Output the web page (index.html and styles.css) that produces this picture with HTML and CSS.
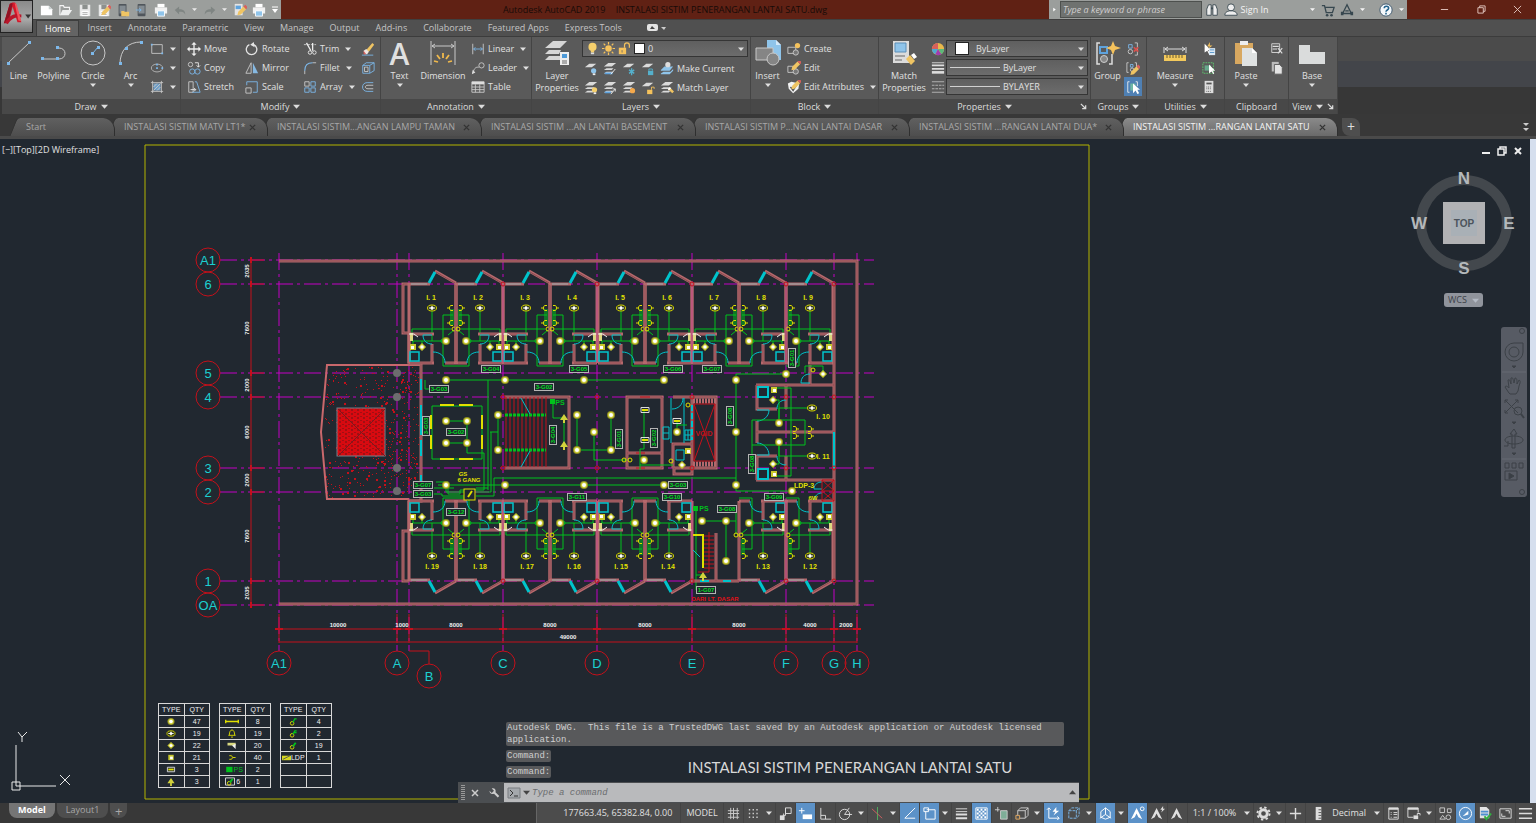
FILE: index.html
```html
<!DOCTYPE html>
<html lang="en">
<head>
    <meta charset="UTF-8">
    <meta name="viewport" content="width=device-width, initial-scale=1.0">
    <title>Autodesk AutoCAD 2019 - INSTALASI SISTIM PENERANGAN LANTAI SATU.dwg</title>
    <link rel="stylesheet" href="styles.css">
</head>
<body>
    <!-- Icon sprite -->
    <svg class="sprite" aria-hidden="true">
        <symbol id="caret" viewBox="0 0 8 8"><path d="M0 2h8L4 6.500z" fill="currentColor"/></symbol>
        <symbol id="launch" viewBox="0 0 8 8"><path d="M1 1l5 5M6.5 2.5v4h-4" fill="none" stroke="currentColor" stroke-width="1.4"/></symbol>
        <symbol id="new" viewBox="0 0 16 16"><path d="M1 3h9l4 4v7H1z" fill="#fff"/><path d="M10 3l4 4h-4z" fill="#c8d0d0"/></symbol>
        <symbol id="open" viewBox="0 0 16 16"><path d="M1 14V3h4l1 2h6v3" fill="none" stroke="#f4f4f4" stroke-width="1.3"/><path d="M4 8h11l-4 6H1z" fill="#eef0f0"/></symbol>
        <symbol id="save" viewBox="0 0 16 16"><path d="M2 2h12v13H2z" fill="#e8e8e8"/><path d="M5 2h6v5H5z" fill="#8c908e"/><path d="M4 9h8v6H4z" fill="#fff"/><path d="M5 11h6M5 13h6" stroke="#a5a5a5"/></symbol>
        <symbol id="pencil" viewBox="0 0 16 16"><path d="M5 14l1-4 6-6 3 3-6 6z" fill="#efc463"/><path d="M12 4l2-2 3 3-2 2z" fill="#d8605c"/></symbol>
        <symbol id="phone" viewBox="0 0 16 16"><rect x="3" y="1" width="9" height="14" rx="1" fill="#50565c"/><path d="M4 3h7v9H4z" fill="#848c92"/></symbol>
        <symbol id="print" viewBox="0 0 16 16"><path d="M4 1h8v4H4z" fill="#fff"/><path d="M1 5h14v7H1z" fill="#f1f1f1"/><path d="M4 9h8v6H4z" fill="#8fc4ea" stroke="#fff"/></symbol>
        <symbol id="undo" viewBox="0 0 16 16"><path d="M2 8l5-4v3c5 0 7 2 7 6-2-3-4-3-7-3v3z" fill="#7f8583"/></symbol>
        <symbol id="line" viewBox="0 0 26 26"><path d="M2 23L24 2" stroke="#c8c8c8"/><path d="M1 22h3v3H1zM22 1h3v3h-3z" fill="#7db8ea"/></symbol>
        <symbol id="polyline" viewBox="0 0 26 26"><path d="M2 19h16c8 0 8-11 0-11" fill="none" stroke="#c8c8c8"/><path d="M0 17h3v3H0zM15 17h3v3h-3zM15 6h3v3h-3z" fill="#7db8ea"/></symbol>
        <symbol id="circle" viewBox="0 0 26 26"><circle cx="13" cy="13" r="12" fill="none" stroke="#c8c8c8"/><path d="M13 13l5-6" stroke="#7db8ea"/><path d="M11 12h3v3h-3zM17 6h3v3h-3z" fill="#7db8ea"/></symbol>
        <symbol id="arc" viewBox="0 0 26 26"><path d="M2 24C2 10 10 2 23 2" fill="none" stroke="#c8c8c8"/><path d="M1 22h3v3H1zM22 1h3v3h-3zM7 7h3v3H7z" fill="#7db8ea"/></symbol>
        <symbol id="rect" viewBox="0 0 16 16"><path d="M2 3h12v10H2z" fill="none" stroke="#c8c8c8"/><path d="M1 2h2v2H1zM13 12h2v2h-2z" fill="#7db8ea"/></symbol>
        <symbol id="ellipse" viewBox="0 0 16 16"><ellipse cx="8" cy="8" rx="6.500" ry="4.500" fill="none" stroke="#b8b8b8"/><path d="M7 7h2v2H7zM13 7h2v2h-2zM7 3h2v2H7z" fill="#7db8ea"/></symbol>
        <symbol id="hatch" viewBox="0 0 16 16"><path d="M4 4h8v8H4z" fill="#6f9fc8"/><path d="M3 1v14M13 1v14M1 3h14M1 13h14M4 8l4-4M4 12l8-8M8 12l4-4" stroke="#c8c8c8"/></symbol>
        <symbol id="move" viewBox="0 0 16 16"><path d="M8 2v12M2 8h12" stroke="#eee" stroke-width="1.500"/><path d="M8 0l3 3H5zM8 16l3-3H5zM0 8l3-3v6zM16 8l-3-3v6z" fill="#eee"/></symbol>
        <symbol id="copy" viewBox="0 0 16 16"><circle cx="4" cy="4" r="2.500" fill="none" stroke="#ccc"/><path d="M9 2h4v5M11 5l2 2 2-2" fill="none" stroke="#eee"/><circle cx="6" cy="12" r="3" fill="none" stroke="#7db8ea"/><circle cx="12" cy="12" r="3" fill="none" stroke="#7db8ea"/></symbol>
        <symbol id="stretch" viewBox="0 0 16 16"><path d="M2 2h5v12H2z" fill="none" stroke="#ccc"/><path d="M9 2h2l4 12H6" fill="none" stroke="#7db8ea"/><path d="M4 11h6M8 9l2 2-2 2" fill="none" stroke="#eee"/></symbol>
        <symbol id="rotate" viewBox="0 0 16 16"><path d="M10 3a6 6 0 1 1-5 0" fill="none" stroke="#e4e4e4" stroke-width="1.500"/><path d="M10 0l-4 3 5 3z" fill="#e4e4e4"/></symbol>
        <symbol id="mirror" viewBox="0 0 16 16"><path d="M7 2v12H1z" fill="none" stroke="#ccc"/><path d="M9 2v12h6z" fill="#86b9e2"/></symbol>
        <symbol id="scale" viewBox="0 0 16 16"><path d="M2 6V2h12v12h-5" fill="none" stroke="#7db8ea"/><path d="M1 9h6v6H1z" fill="none" stroke="#ccc"/></symbol>
        <symbol id="trim" viewBox="0 0 16 16"><path d="M1 3h14" stroke="#ccc" stroke-dasharray="3 1"/><path d="M4 1l5 9M11 1v9" stroke="#eee" stroke-width="1.500"/><circle cx="8" cy="12" r="2" fill="none" stroke="#eee"/><circle cx="13" cy="12" r="2" fill="none" stroke="#eee"/></symbol>
        <symbol id="fillet" viewBox="0 0 16 16"><path d="M2 15v-4M11 2h4" stroke="#ccc"/><path d="M2 11c0-6 3-9 9-9" fill="none" stroke="#7db8ea" stroke-width="1.300"/></symbol>
        <symbol id="array" viewBox="0 0 16 16"><path d="M2 2h5v5H2z" fill="none" stroke="#ccc"/><path d="M9 2h5v5H9zM2 9h5v5H2zM9 9h5v5H9z" fill="none" stroke="#7db8ea"/></symbol>
        <symbol id="erase" viewBox="0 0 16 16"><path d="M6 9l7-8 2 2-6 8z" fill="#efc463"/><path d="M3 10l3-2 3 3-2 3H4z" fill="#f1e7e2"/><path d="M1 15h13" stroke="#7db8ea"/><path d="M3 10l3 4H3z" fill="#d8605c"/></symbol>
        <symbol id="explode" viewBox="0 0 16 16"><path d="M2 5h8v9H2zM2 5l4-3h9v9l-5 3M10 5l5-3" fill="none" stroke="#7db8ea"/><path d="M4 7h4v5H4z" fill="none" stroke="#ccc"/></symbol>
        <symbol id="offset" viewBox="0 0 16 16"><path d="M14 3H7C0 3 0 13 7 13h7" fill="none" stroke="#7db8ea"/><path d="M14 6H8C4 6 4 10 8 10h6" fill="none" stroke="#ccc"/></symbol>
        <symbol id="dimension" viewBox="0 0 26 26"><path d="M1 1v24M25 1v24M2 6h22M5 4L2 6l3 2M21 4l3 2-3 2" fill="none" stroke="#c8c8c8"/><path d="M13 13v5M7 15l3 4M19 15l-3 4M4 21l4 1M22 21l-4 1" stroke="#f0b94c" stroke-width="1.800"/></symbol>
        <symbol id="linear" viewBox="0 0 16 16"><path d="M2 2v12M14 2v12" stroke="#ccc"/><path d="M3 8h10M5 6L3 8l2 2M11 6l2 2-2 2" fill="none" stroke="#7db8ea"/></symbol>
        <symbol id="leader" viewBox="0 0 16 16"><path d="M2 14C4 7 6 7 9 7" fill="none" stroke="#ccc"/><circle cx="12" cy="5" r="3" fill="none" stroke="#ccc"/><path d="M1 15l1-5 3 3z" fill="#ddd"/></symbol>
        <symbol id="table" viewBox="0 0 16 16"><path d="M1 2h14v12H1zM1 8h14M1 11h14M5 5v9M10 5v9" fill="none" stroke="#ccc"/><path d="M1 2h14v3H1z" fill="#ddd"/></symbol>
        <symbol id="stack" viewBox="0 0 16 16"><path d="M1 5l5-4h9l-5 4zM1 9l3-2h8l-2 2zM1 13l3-2h8l-2 2z" fill="#dadada"/></symbol>
        <symbol id="sheet" viewBox="0 0 16 16"><path d="M1 6l5-4h8l-5 4z" fill="#dadada"/></symbol>
        <symbol id="layers" viewBox="0 0 26 26"><path d="M1 8l8-7h14l-7 7zM1 14l4-4h12l-2 4zM1 20l4-4h11v4z" fill="#d6d6d6"/><path d="M16 12h9v13h-9z" fill="#eee"/><path d="M18 14h5v4h-5z" fill="#4e9ad8"/><path d="M18 21h5M18 23h5" stroke="#666"/></symbol>
        <symbol id="bulb" viewBox="0 0 16 16"><circle cx="8" cy="6" r="5" fill="#f5cf6c"/><path d="M6 10h4v3H6z" fill="#f5cf6c"/><path d="M6 14h4" stroke="#ddd" stroke-width="2"/></symbol>
        <symbol id="sun" viewBox="0 0 16 16"><circle cx="8" cy="8" r="4" fill="#f5c25c"/><path d="M8 0v3M8 13v3M0 8h3M13 8h3M2 2l2 2M12 12l2 2M14 2l-2 2M4 12l-2 2" stroke="#f5c25c" stroke-width="1.500"/></symbol>
        <symbol id="lock" viewBox="0 0 16 16"><path d="M1 7h9v8H1z" fill="#f5c25c"/><path d="M8 7V4c0-4 6-4 6 0v3" fill="none" stroke="#f5c25c" stroke-width="1.500"/><path d="M5 10v3" stroke="#666"/></symbol>
        <symbol id="insert" viewBox="0 0 26 26"><path d="M12 0h9l5 5v15H12z" fill="#8fc4ea"/><path d="M21 0l5 5h-5z" fill="#d4e8f8"/><path d="M1 8h17v12H1z" fill="#858585" stroke="#c8c8c8"/><circle cx="18" cy="19" r="6" fill="#858585" stroke="#c8c8c8"/></symbol>
        <symbol id="block" viewBox="0 0 16 16"><path d="M1 6h9v7H1z" fill="none" stroke="#ccc"/><circle cx="10" cy="12" r="3" fill="#777" stroke="#ccc"/></symbol>
        <symbol id="tag" viewBox="0 0 16 16"><path d="M1 4l4-2 9 2-1 6-6 5-5-5z" fill="#f2f2f2"/><path d="M4 8l3 4 5-8" fill="none" stroke="#555" stroke-width="1.500"/></symbol>
        <symbol id="match" viewBox="0 0 26 26"><path d="M2 1h16v22H2z" fill="#dcdcdc"/><path d="M4 3h11v9H4z" fill="#8fc4ea" stroke="#5c8fb8"/><path d="M4 16h10M4 20h7" stroke="#666"/><path d="M15 19l4-4 5 6-4 4z" fill="#efc463"/><path d="M20 15l3-2 3 4-3 2z" fill="#fff"/></symbol>
        <symbol id="wheel" viewBox="0 0 16 16"><circle cx="8" cy="8" r="7" fill="#e8b84c"/><path d="M8 8V1a7 7 0 0 0-7 7z" fill="#d8605c"/><path d="M8 8H1a7 7 0 0 0 4 6z" fill="#4fa9d0"/><path d="M8 8l-3 6a7 7 0 0 0 7 0z" fill="#a03cb0"/><path d="M8 8l4 6a7 7 0 0 0 3-6z" fill="#5cb87c"/></symbol>
        <symbol id="weights" viewBox="0 0 16 16"><path d="M1 2h14" stroke="#ddd"/><path d="M1 5h14" stroke="#ddd" stroke-width="2"/><path d="M1 9h14" stroke="#ddd" stroke-width="2"/><path d="M1 13h14" stroke="#ddd" stroke-width="3"/></symbol>
        <symbol id="types" viewBox="0 0 16 16"><path d="M1 2h14M1 14h14" stroke="#bbb"/><path d="M1 6h14M1 10h14" stroke="#bbb" stroke-dasharray="3 1"/></symbol>
        <symbol id="group" viewBox="0 0 26 26"><path d="M5 3H2v21h3M14 24h3V14" fill="none" stroke="#ddd" stroke-width="1.500"/><path d="M5 7h7v6H5z" fill="none" stroke="#5ea3de" stroke-width="2"/><circle cx="9" cy="19" r="3.500" fill="#888" stroke="#ccc"/><path d="M18 1l2 5 6 2-6 2-2 5-2-5-5-2 5-2z" fill="#f5c25c"/></symbol>
        <symbol id="ungroup" viewBox="0 0 16 16"><path d="M3 3h4v4H3z" fill="none" stroke="#7db8ea"/><path d="M10 1h3v14h-3" fill="none" stroke="#ccc"/><circle cx="5" cy="11" r="2.500" fill="none" stroke="#ccc"/><path d="M9 6l5 5M14 6l-5 5" stroke="#d8504c" stroke-width="2"/></symbol>
        <symbol id="groupsel" viewBox="0 0 16 16"><path d="M4 2H2v12h2M11 2h2v5" fill="none" stroke="#eee"/><path d="M5 4h6v8H5z" fill="#6fb8a4"/><path d="M8 4v11l3-3 2 4 2-1-2-4h3z" fill="#fff"/></symbol>
        <symbol id="measure" viewBox="0 0 26 26"><path d="M2 7v6M24 7v6M3 9h20M6 7L3 9l3 2M20 7l3 2-3 2" fill="none" stroke="#ddd"/><path d="M2 15h22v6H2z" fill="#f3c95c"/><path d="M5 15v3M8 15v3M11 15v3M14 15v3M17 15v3M20 15v3" stroke="#6a5a30"/></symbol>
        <symbol id="quick" viewBox="0 0 16 16"><path d="M3 2v10l3-2 2 4 1-1-2-4h3z" fill="#fff"/><path d="M9 0L6 5h3L7 8l5-4H9z" fill="#f5c25c"/><path d="M8 7h7v8H8z" fill="#dbe9f4"/><path d="M9 9h5M9 12h5" stroke="#4e8fc8"/></symbol>
        <symbol id="select" viewBox="0 0 16 16"><path d="M1 2h12v12H1z" fill="none" stroke="#5ecb70" stroke-dasharray="2 1"/><path d="M3 5h7v6H3z" fill="#67a98c"/><path d="M8 4v10l3-2 2 3 1-1-2-3h3z" fill="#fff"/></symbol>
        <symbol id="calc" viewBox="0 0 16 16"><path d="M3 1h10v14H3z" fill="#ddd"/><path d="M5 3h6v2H5z" fill="#555"/><path d="M5 8h6M5 10h6M5 13h6" stroke="#555" stroke-dasharray="1 1"/></symbol>
        <symbol id="paste" viewBox="0 0 26 26"><path d="M2 3h18v21H2z" fill="#d8a860"/><path d="M7 1h8v4H7z" fill="#eee"/><path d="M9 8h10l5 5v13H9z" fill="#dfe2e2"/><path d="M19 8l5 5h-5z" fill="#fff"/></symbol>
        <symbol id="cut" viewBox="0 0 16 16"><path d="M2 2h9v10H2z" fill="none" stroke="#ddd"/><path d="M3 5h7M3 8h5M9 7l5 6M14 7l-5 6" stroke="#ddd" stroke-width="1.300"/></symbol>
        <symbol id="pages" viewBox="0 0 16 16"><path d="M2 1h8v11H2z" fill="#bbb"/><path d="M5 4h6l3 3v8H5z" fill="#e4e4e4" stroke="#555"/></symbol>
        <symbol id="base" viewBox="0 0 26 26"><path d="M0 5h11v7h15v12H0z" fill="#dadcdc"/></symbol>
        <symbol id="wrench" viewBox="0 0 16 16"><path d="M2 5l3 3 3-3-3-3c4-1 6 2 5 5l5 5-2 2-5-5c-4 1-6-1-6-4z" fill="#ccc"/></symbol>
        <symbol id="close" viewBox="0 0 8 8"><path d="M1 1l6 6M7 1L1 7" stroke="currentColor" stroke-width="1.500"/></symbol>
        <!-- status bar -->
        <symbol id="s-grid" viewBox="0 0 16 16"><path d="M5 2v12M8 2v12M12 2v12M2 5h12M2 8h12M2 12h12" stroke="#ccc"/></symbol>
        <symbol id="s-dots" viewBox="0 0 16 16"><path d="M3 4h10M3 8h10M3 12h10" stroke="#ccc" stroke-width="1.500" stroke-dasharray="1.500 2.500"/></symbol>
        <symbol id="s-infer" viewBox="0 0 16 16"><path d="M6 14V8M8 2h6v6H8z" fill="none" stroke="#ddd"/><path d="M8 2v8H5" fill="none" stroke="#ddd"/><path d="M2 10h5v5H2z" fill="#ddd"/></symbol>
        <symbol id="s-dyn" viewBox="0 0 16 16"><path d="M4 2v6M1 5h6" stroke="#fff"/><path d="M5 9h10v5H5z" fill="#fff"/></symbol>
        <symbol id="s-ortho" viewBox="0 0 16 16"><path d="M3 2v12h11M3 10h5v4" fill="none" stroke="#ddd"/></symbol>
        <symbol id="s-polar" viewBox="0 0 16 16"><circle cx="7" cy="9" r="5.500" fill="none" stroke="#ddd"/><path d="M7 9h8M7 9l5-7" stroke="#ddd"/></symbol>
        <symbol id="s-iso" viewBox="0 0 16 16"><path d="M8 1v14" stroke="#4fae5c"/><path d="M2 3l11 10" stroke="#d06060"/></symbol>
        <symbol id="s-track" viewBox="0 0 16 16"><path d="M14 2L3 13h11" fill="none" stroke="#fff"/></symbol>
        <symbol id="s-osnap" viewBox="0 0 16 16"><path d="M5 4h9v10H4V6" fill="none" stroke="#fff"/><path d="M2 2h5v4H2z" fill="none" stroke="#fff"/></symbol>
        <symbol id="s-lw" viewBox="0 0 16 16"><path d="M2 3h12M2 6h12" stroke="#ddd"/><path d="M2 9h12M2 13h12" stroke="#ddd" stroke-width="2"/></symbol>
        <symbol id="s-trans" viewBox="0 0 16 16"><path d="M2 2h12v12H2z" fill="none" stroke="#fff"/><path d="M3 4h10M3 8h10M3 12h10" stroke="#fff" stroke-width="2" stroke-dasharray="2 2"/><path d="M5 6h8M5 10h8" stroke="#fff" stroke-width="2" stroke-dasharray="2 2"/></symbol>
        <symbol id="s-cycle" viewBox="0 0 16 16"><path d="M1 4h5M4 1v5" stroke="#ccc"/><path d="M7 5h7v9H7z" fill="#7fae98" stroke="#ccc"/></symbol>
        <symbol id="s-cube" viewBox="0 0 16 16"><path d="M4 5h8v8H4zM4 5l3-3h8v8l-3 3M12 5l3-3" fill="none" stroke="#ccc"/><path d="M2 10h4v4H2z" fill="#555" stroke="#e0a860"/></symbol>
        <symbol id="s-ucs" viewBox="0 0 16 16"><path d="M3 2v11h11M1 4l2-2 2 2M12 11l2 2-2 2" fill="none" stroke="#fff"/><path d="M11 1L7 6h3l-2 4 6-5h-3z" fill="#fff"/></symbol>
        <symbol id="s-filter" viewBox="0 0 16 16"><path d="M3 5h8v8H3zM3 5l3-3h8v8l-3 3M11 5l3-3" fill="none" stroke="#7db8ea" stroke-dasharray="3 1"/></symbol>
        <symbol id="s-gizmo" viewBox="0 0 16 16"><path d="M8 2L3 6v6l5 2 5-2V6zM8 2v7M8 9l-6 4M8 9l6 4" fill="none" stroke="#fff"/></symbol>
        <symbol id="s-anno" viewBox="0 0 16 16"><path d="M7 2L1 14l4-2 2-4 2 4 4 2z" fill="currentColor"/></symbol>
        <symbol id="s-gear" viewBox="0 0 16 16"><circle cx="8" cy="8" r="4" fill="none" stroke="#ddd" stroke-width="3"/><circle cx="8" cy="8" r="6.500" fill="none" stroke="#ddd" stroke-width="2" stroke-dasharray="2.500 2.600"/></symbol>
        <symbol id="s-plus" viewBox="0 0 16 16"><path d="M8 2v12M2 8h12" stroke="#ddd" stroke-width="1.500"/></symbol>
        <symbol id="s-ruler" viewBox="0 0 16 16"><path d="M5 1h6v14H5z" fill="#ddd"/><path d="M8 4h3M8 7h3M8 10h3M8 13h3" stroke="#555"/></symbol>
        <symbol id="s-props" viewBox="0 0 16 16"><path d="M3 2h10v12H3z" fill="none" stroke="#ddd"/><path d="M3 3h10" stroke="#ddd" stroke-width="2"/><path d="M5 7h1M8 7h4M5 9h1M8 9h4M5 12h1M8 12h4" stroke="#ddd"/></symbol>
        <symbol id="s-uilock" viewBox="0 0 16 16"><path d="M8 12H2V2h11v5" fill="none" stroke="#ddd"/><path d="M2 3h11" stroke="#ddd" stroke-width="2"/><path d="M8 10h5v4H8z" fill="#ddd"/><path d="M12 10V8h3v2" fill="none" stroke="#ddd"/></symbol>
        <symbol id="s-isolate" viewBox="0 0 16 16"><path d="M2 2h5v5H2zM10 3h4v4h-4zM5 10l3 4H2z" fill="none" stroke="#ccc"/><circle cx="11" cy="12" r="2.500" fill="none" stroke="#ccc"/></symbol>
        <symbol id="s-perf" viewBox="0 0 16 16"><circle cx="8" cy="8" r="6.500" fill="none" stroke="#fff"/><path d="M5 11l6-6v4z" fill="#fff"/></symbol>
        <symbol id="s-doc" viewBox="0 0 16 16"><path d="M2 1h7l3 3v9H2z" fill="#e4e4e4"/><path d="M3 6h8M3 9h8" stroke="#4e8fd0" stroke-width="2"/><path d="M7 11l2 3 5-6" fill="none" stroke="#30b040" stroke-width="2"/></symbol>
        <symbol id="s-full" viewBox="0 0 16 16"><path d="M2 3h12v10H2z" fill="none" stroke="#ddd"/><path d="M8 5h4v3M4 8v3h4" fill="none" stroke="#ddd"/></symbol>
        <symbol id="s-menu" viewBox="0 0 16 16"><path d="M1 3h14M1 8h14M1 13h14" stroke="#ddd" stroke-width="1.500"/></symbol>
    </svg>

    <!-- Title bar -->
    <header class="titlebar">
        <button class="app-menu" aria-label="Application menu">
            <svg viewBox="0 0 32 32"><path d="M3 23L9 3c1-1 4-2 6-1l6 20h-4L12 6 8 22z" fill="#d3182b"/><path d="M9 3c2-1 3-1 3 0L7 23H3z" fill="#8f1223"/><path d="M4 22c4-7 10-10 17-8v3c-6-1-10 1-14 7z" fill="#b8162a"/><path d="M14 2l2 1 5 18-3-1z" fill="#f0545c"/><path d="M25 14h6l-3 4z" fill="#333"/></svg>
        </button>
        <div class="quick">
            <button aria-label="New"><svg><use href="#new"/></svg></button>
            <button aria-label="Open"><svg><use href="#open"/></svg></button>
            <button aria-label="Save"><svg><use href="#save"/></svg></button>
            <button aria-label="Save as"><svg><use href="#save"/><use href="#pencil"/></svg></button>
            <button aria-label="Open from mobile"><svg viewBox="0 0 16 16"><use href="#phone"/><path d="M6 9h3l1 1h5v5H6z" fill="#efc463"/></svg></button>
            <button aria-label="Save to mobile"><svg viewBox="0 0 16 16"><use href="#phone"/><path d="M1 8h6M5 6l2 2-2 2" stroke="#7db8ea" fill="none"/></svg></button>
            <button aria-label="Plot"><svg><use href="#print"/></svg></button>
            <button aria-label="Undo"><svg><use href="#undo"/></svg></button>
            <button class="mini" aria-label="Undo list"><svg><use href="#caret"/></svg></button>
            <button aria-label="Redo"><svg class="flip"><use href="#undo"/></svg></button>
            <button class="mini" aria-label="Redo list"><svg><use href="#caret"/></svg></button>
            <button aria-label="Batch plot"><svg viewBox="0 0 16 16"><path d="M2 1h9v13H2z" fill="#e4e4e4"/><path d="M3 3h6v4H3z" fill="#5ea3de"/><use href="#pencil"/></svg></button>
            <button aria-label="Plot preview"><svg><use href="#print"/></svg></button>
            <button class="mini" aria-label="Customize"><svg viewBox="0 0 8 8"><path d="M1 1h6" stroke="#fff"/><path d="M1 3h6L4 7z" fill="#fff"/></svg></button>
        </div>
        <h1>Autodesk AutoCAD 2019 <span>INSTALASI SISTIM PENERANGAN LANTAI SATU.dwg</span></h1>
        <div class="info">
            <button class="mini" aria-label="Collapse search"><svg viewBox="0 0 8 8"><path d="M2 1l4 3-4 3z" fill="#fff"/></svg></button>
            <input type="text" aria-label="Search" placeholder="Type a keyword or phrase">
            <button aria-label="Find"><svg viewBox="0 0 16 16"><path d="M2 14V7l2-5h3v12zM9 14V2h3l2 5v7z" fill="#eee" stroke="#37474f"/><path d="M7 6h2" stroke="#37474f" stroke-width="2"/></svg></button>
            <button class="sign"><svg viewBox="0 0 16 16"><circle cx="8" cy="5" r="4" fill="#eee" stroke="#37474f"/><path d="M1 14c0-4 3-4 5-5h4c2 1 5 1 5 5z" fill="#eee" stroke="#37474f"/></svg>Sign In<svg class="c"><use href="#caret"/></svg></button>
            <button class="cart" aria-label="App store"><svg viewBox="0 0 16 16"><path d="M1 3h3l2 8h7l2-6H5" fill="none" stroke="#37474f" stroke-width="1.500"/><circle cx="7" cy="14" r="1.500" fill="#37474f"/><circle cx="12" cy="14" r="1.500" fill="#37474f"/></svg></button>
            <button aria-label="Stay connected"><svg viewBox="0 0 16 16"><path d="M8 2L3 12h10zM6 9h4" fill="none" stroke="#37474f" stroke-width="1.500"/><path d="M1 10h3v4H1zM12 10h3v4h-3z" fill="#37474f"/></svg></button>
            <button class="mini" aria-label="Connect menu"><svg><use href="#caret"/></svg></button>
            <button class="help" aria-label="Help"><svg viewBox="0 0 16 16"><circle cx="8" cy="8" r="7" fill="#f4f8fb" stroke="#37536a"/><path d="M6 6c0-3 5-3 5 0 0 2-3 2-3 4M8 11v2" fill="none" stroke="#23638c" stroke-width="1.800"/></svg></button>
            <button class="mini" aria-label="Help menu"><svg><use href="#caret"/></svg></button>
        </div>
        <div class="window">
            <button aria-label="Minimize"><svg viewBox="0 0 10 10"><path d="M1 5h8" stroke="currentColor"/></svg></button>
            <button aria-label="Restore"><svg viewBox="0 0 10 10"><path d="M1 3h6v6H1zM3 3V1h6v6H7" fill="none" stroke="currentColor"/></svg></button>
            <button aria-label="Close"><svg viewBox="0 0 10 10"><path d="M1 1l8 8M9 1L1 9" stroke="currentColor"/></svg></button>
        </div>
    </header>

    <nav class="menu">
        <a class="on" href="#">Home</a><a href="#">Insert</a><a href="#">Annotate</a><a href="#">Parametric</a><a href="#">View</a><a href="#">Manage</a><a href="#">Output</a><a href="#">Add-ins</a><a href="#">Collaborate</a><a href="#">Featured Apps</a><a href="#">Express Tools</a>
        <button aria-label="Minimize ribbon"><svg viewBox="0 0 20 8"><rect x="1" width="11" height="7" rx="2" fill="#e4e4e4"/><path d="M4 5h5L6 2z" fill="#444"/><path d="M15 3h5l-2 3z" fill="#ccc"/></svg></button>
    </nav>

    <!-- Ribbon -->
    <div class="ribbon">
        <section class="panel">
            <div class="tools">
                <button class="big w33"><svg><use href="#line"/></svg>Line</button>
                <button class="big w36"><svg><use href="#polyline"/></svg>Polyline</button>
                <button class="big w42"><svg><use href="#circle"/></svg>Circle<svg class="c"><use href="#caret"/></svg></button>
                <button class="big w33"><svg><use href="#arc"/></svg>Arc<svg class="c"><use href="#caret"/></svg></button>
                <div class="col">
                    <button aria-label="Rectangle"><svg><use href="#rect"/></svg><svg class="c"><use href="#caret"/></svg></button>
                    <button aria-label="Ellipse"><svg><use href="#ellipse"/></svg><svg class="c"><use href="#caret"/></svg></button>
                    <button aria-label="Hatch"><svg><use href="#hatch"/></svg><svg class="c"><use href="#caret"/></svg></button>
                </div>
            </div>
            <h2>Draw <svg class="c"><use href="#caret"/></svg></h2>
        </section>
        <section class="panel">
            <div class="tools pad">
                <div class="col w58">
                    <button><svg><use href="#move"/></svg>Move</button>
                    <button><svg><use href="#copy"/></svg>Copy</button>
                    <button><svg><use href="#stretch"/></svg>Stretch</button>
                </div>
                <div class="col w58">
                    <button><svg><use href="#rotate"/></svg>Rotate</button>
                    <button><svg><use href="#mirror"/></svg>Mirror</button>
                    <button><svg><use href="#scale"/></svg>Scale</button>
                </div>
                <div class="col w58">
                    <button><svg><use href="#trim"/></svg>Trim<svg class="c"><use href="#caret"/></svg></button>
                    <button><svg><use href="#fillet"/></svg>Fillet<svg class="c"><use href="#caret"/></svg></button>
                    <button><svg><use href="#array"/></svg>Array<svg class="c"><use href="#caret"/></svg></button>
                </div>
                <div class="col">
                    <button aria-label="Erase"><svg><use href="#erase"/></svg></button>
                    <button aria-label="Explode"><svg><use href="#explode"/></svg></button>
                    <button aria-label="Offset"><svg><use href="#offset"/></svg></button>
                </div>
            </div>
            <h2>Modify <svg class="c"><use href="#caret"/></svg></h2>
        </section>
        <section class="panel">
            <div class="tools">
                <button class="big w36"><span class="glyph" aria-hidden="true">A</span>Text<svg class="c"><use href="#caret"/></svg></button>
                <button class="big w50"><svg><use href="#dimension"/></svg>Dimension</button>
                <div class="col w58">
                    <button><svg><use href="#linear"/></svg>Linear<svg class="c"><use href="#caret"/></svg></button>
                    <button><svg><use href="#leader"/></svg>Leader<svg class="c"><use href="#caret"/></svg></button>
                    <button><svg><use href="#table"/></svg>Table</button>
                </div>
            </div>
            <h2>Annotation <svg class="c"><use href="#caret"/></svg></h2>
        </section>
        <section class="panel">
            <div class="tools">
                <button class="big w50"><svg><use href="#layers"/></svg>Layer<br>Properties</button>
                <div class="col grow">
                    <div class="combo">
                        <svg><use href="#bulb"/></svg><svg><use href="#sun"/></svg><svg><use href="#lock"/></svg><i class="swatch"></i>
                        <select aria-label="Layer"><option>0</option></select><svg class="c"><use href="#caret"/></svg>
                    </div>
                    <div class="row">
                        <button aria-label="Off"><svg viewBox="0 0 16 16"><use href="#sheet"/><circle cx="11" cy="10" r="3" fill="#8fc4ea"/><path d="M10 13h3v2h-3z" fill="#eee"/></svg></button>
                        <button aria-label="Isolate"><svg viewBox="0 0 16 16"><use href="#stack"/><path d="M2 13h9" stroke="#5ea3de" stroke-width="2"/><path d="M9 14l5-6" stroke="#eee"/></svg></button>
                        <button aria-label="Freeze"><svg viewBox="0 0 16 16"><use href="#sheet"/><path d="M11 7v8M8 9l6 4M14 9l-6 4" stroke="#55b0cc" stroke-width="1.500"/></svg></button>
                        <button aria-label="Lock layer"><svg viewBox="0 0 16 16"><use href="#sheet"/><path d="M8 10h6v5H8z" fill="#55b0cc"/><path d="M9 10V8h4v2" fill="none" stroke="#55b0cc"/></svg></button>
                        <button><svg viewBox="0 0 16 16"><path d="M1 9l4-4h10l-4 5H1zM1 13l3-2h8l3-3v2l-4 4H1z" fill="#8fc4ea"/><circle cx="9" cy="3" r="3" fill="#ddd"/></svg>Make Current</button>
                    </div>
                    <div class="row">
                        <button aria-label="Turn on"><svg viewBox="0 0 16 16"><use href="#stack"/><circle cx="12" cy="10" r="3" fill="#f5cf6c"/><path d="M11 13h3v2h-3z" fill="#eee"/></svg></button>
                        <button aria-label="Unisolate"><svg viewBox="0 0 16 16"><use href="#stack"/><path d="M2 13h7" stroke="#5ea3de" stroke-width="2"/><path d="M9 15l5-6M11 9h3v3" stroke="#eee" fill="none"/></svg></button>
                        <button aria-label="Thaw"><svg viewBox="0 0 16 16"><use href="#stack"/><circle cx="12" cy="11" r="3" fill="#f5a94c"/></svg></button>
                        <button aria-label="Unlock layer"><svg viewBox="0 0 16 16"><use href="#sheet"/><path d="M7 10h6v5H7z" fill="#f5c25c"/><path d="M12 10V7h3v2" fill="none" stroke="#f5c25c"/></svg></button>
                        <button><svg viewBox="0 0 16 16"><use href="#stack"/><path d="M9 9l5 5 2-2-4-4z" fill="#efc463"/><path d="M9 9l2-2 2 1-3 3z" fill="#fff"/></svg>Match Layer</button>
                    </div>
                </div>
            </div>
            <h2>Layers <svg class="c"><use href="#caret"/></svg></h2>
        </section>
        <section class="panel">
            <div class="tools">
                <button class="big w33"><svg><use href="#insert"/></svg>Insert<svg class="c"><use href="#caret"/></svg></button>
                <div class="col grow">
                    <button><svg viewBox="0 0 16 16"><use href="#block"/><circle cx="12" cy="4" r="3" fill="#f5c25c"/></svg>Create</button>
                    <button><svg><use href="#block"/><use href="#pencil" y="-3"/></svg>Edit</button>
                    <button><svg><use href="#tag"/><use href="#pencil" y="-3"/></svg>Edit Attributes<svg class="c"><use href="#caret"/></svg></button>
                </div>
            </div>
            <h2>Block <svg class="c"><use href="#caret"/></svg></h2>
        </section>
        <section class="panel">
            <div class="tools">
                <button class="big w50"><svg><use href="#match"/></svg>Match<br>Properties</button>
                <div class="col icons">
                    <button aria-label="Color"><svg><use href="#wheel"/></svg></button>
                    <button aria-label="Lineweight"><svg><use href="#weights"/></svg></button>
                    <button aria-label="Linetype"><svg><use href="#types"/></svg></button>
                </div>
                <div class="col grow">
                    <div class="combo"><i class="swatch big-swatch"></i><select aria-label="Object color"><option>ByLayer</option></select><svg class="c"><use href="#caret"/></svg></div>
                    <div class="combo"><i class="rule"></i><select aria-label="Lineweight"><option>ByLayer</option></select><svg class="c"><use href="#caret"/></svg></div>
                    <div class="combo"><i class="rule"></i><select aria-label="Linetype"><option>BYLAYER</option></select><svg class="c"><use href="#caret"/></svg></div>
                </div>
            </div>
            <h2>Properties <svg class="c"><use href="#caret"/></svg><svg class="launch"><use href="#launch"/></svg></h2>
        </section>
        <section class="panel">
            <div class="tools">
                <button class="big w33"><svg><use href="#group"/></svg>Group</button>
                <div class="col icons">
                    <button aria-label="Ungroup"><svg><use href="#ungroup"/></svg></button>
                    <button aria-label="Group edit"><svg viewBox="0 0 16 16"><path d="M3 2H1v11h2M10 2h2v5" fill="none" stroke="#ccc"/><path d="M5 4h3v3H5z" fill="none" stroke="#7db8ea"/><circle cx="7" cy="10" r="2" fill="none" stroke="#ccc"/><use href="#pencil" y="2"/></svg></button>
                    <button class="on" aria-label="Group selection"><svg><use href="#groupsel"/></svg></button>
                </div>
            </div>
            <h2>Groups <svg class="c"><use href="#caret"/></svg></h2>
        </section>
        <section class="panel">
            <div class="tools pad">
                <button class="big w50"><svg><use href="#measure"/></svg>Measure<svg class="c"><use href="#caret"/></svg></button>
                <div class="col icons">
                    <button aria-label="Quick select"><svg><use href="#quick"/></svg></button>
                    <button aria-label="Select all"><svg><use href="#select"/></svg></button>
                    <button aria-label="Calculator"><svg><use href="#calc"/></svg></button>
                </div>
            </div>
            <h2>Utilities <svg class="c"><use href="#caret"/></svg></h2>
        </section>
        <section class="panel">
            <div class="tools">
                <button class="big w42"><svg><use href="#paste"/></svg>Paste<svg class="c"><use href="#caret"/></svg></button>
                <div class="col">
                    <button aria-label="Cut"><svg><use href="#cut"/></svg></button>
                    <button aria-label="Copy clip"><svg><use href="#pages"/></svg></button>
                </div>
            </div>
            <h2>Clipboard</h2>
        </section>
        <section class="panel">
            <div class="tools">
                <button class="big grow"><svg><use href="#base"/></svg>Base<svg class="c"><use href="#caret"/></svg></button>
            </div>
            <h2>View <svg class="c"><use href="#caret"/></svg> <svg class="c"><use href="#launch"/></svg></h2>
        </section>
    </div>

    <!-- File tabs -->
    <nav class="files">
        <a class="t1" href="#">Start</a>
        <a class="t2" href="#">INSTALASI SISTIM MATV LT1*<svg><use href="#close"/></svg></a>
        <a class="t3" href="#">INSTALASI SISTIM...ANGAN LAMPU TAMAN<svg><use href="#close"/></svg></a>
        <a class="t3" href="#">INSTALASI SISTIM ...AN LANTAI BASEMENT<svg><use href="#close"/></svg></a>
        <a class="t3" href="#">INSTALASI SISTIM P...NGAN LANTAI DASAR<svg><use href="#close"/></svg></a>
        <a class="t3" href="#">INSTALASI SISTIM ...RANGAN LANTAI DUA*<svg><use href="#close"/></svg></a>
        <a class="t3 on" href="#">INSTALASI SISTIM ...RANGAN LANTAI SATU<svg><use href="#close"/></svg></a>
        <button class="add" aria-label="New drawing">+</button>
        <button class="more" aria-label="More files"><svg viewBox="0 0 8 10"><path d="M1 1h6L4 4zM1 6h6L4 9z" fill="#ccc"/></svg></button>
    </nav>

    <!-- Model space -->
    <main class="canvas">
        <svg class="drawing" viewBox="0 0 1100 664">
            <defs>
                <g id="lamp"><circle r="4" fill="#8c8c20"/><circle r="3" fill="#d2d23c"/><circle r="2" fill="#fff"/></g>
                <g id="oval"><ellipse rx="4.500" ry="3" fill="#333a20" stroke="#d2d200"/><path d="M-3 0h6M0-2v4" stroke="#fff"/><circle r="1.500" fill="#fff"/></g>
                <g id="diamond"><path d="M0-4l4 4-4 4-4-4z" fill="#c8c82c"/><circle r="1.800" fill="#fff"/></g>
                <g id="square"><path d="M-3-3h6v6h-6z" fill="#c8c82c"/><path d="M-1-1h3v3h-3z" fill="#fff"/></g>
                <g id="bar"><path d="M-4-2.500h8v5h-8z" fill="none" stroke="#ddd"/><path d="M-3 0h6" stroke="#e0e000" stroke-width="2"/></g>
                <g id="tri"><path d="M0-4l4 6h-8zM-1 2h2v3h-2z" fill="#d2d23c"/></g>
                <g id="sock"><path d="M2-2.500H0c-2 0-2 5 0 5h2M-1 0h-3" transform="scale(-1 1)" fill="none" stroke="#e0e000"/></g>
                <!-- half of a pair of rooms, measured from the shared wall -->
                <g id="unit" fill="none">
                    <g stroke="#00c21c">
                        <path d="M3 309v16M5 309v16M3 315h10v51H0M5 329h39v12M9 341h35M24 309v32M34 341v5M43 341v5M2 330l6 5"/>
                        <circle cx="13" cy="341" r="2"/>
                    </g>
                    <g stroke="#b5686c" stroke-width="3">
                        <path d="M0 283v80M22 334h25M24 344v19M0 363h11M22 363h25M47 283v80"/>
                    </g>
                    <g stroke="#8a4c52" stroke-width="1">
                        <path d="M0 285v76M24 334h22M24 345v17M2 363h9M24 363h22"/>
                    </g>
                    <g stroke="#00c4cc">
                        <path d="M11 363c0-7 5-11 12-11M33 335c0 6-4 9-9 9M24 335h9"/>
                        <path d="M37 352h9v9h-9z" stroke-width="1.500"/>
                    </g>
                    <path d="M43 333h3v8h-3z" fill="#ddd880"/><path d="M38 337l4-3h5" stroke="#eee"/>
                    <use href="#sock" x="5" y="308"/><use href="#sock" x="5" y="323"/>
                    <circle cx="2" cy="329" r="2" stroke="#e0e000"/>
                    <use href="#oval" x="24" y="308"/><use href="#lamp" x="10" y="341"/><use href="#diamond" x="34" y="347"/><use href="#square" x="43" y="347"/>
                </g>
                <g id="bay" fill="none">
                    <path d="M0 284h21M26 271l21 12" stroke="#b5686c" stroke-width="3"/>
                    <path d="M2 284h16" stroke="#8fb0b0"/>
                    <path d="M27 272l19 11" stroke="#8a4c52"/>
                    <path d="M20 283l6-11" stroke="#00c4cc" stroke-width="3"/>
                </g>
                <pattern id="brick" width="6" height="4" patternUnits="userSpaceOnUse"><path d="M0 0h6v4H0z" fill="#d80a10"/><path d="M0 0h2M3 2h2" stroke="#6a1418"/></pattern>
            </defs>
            <g id="plan" transform="translate(0 -139)">
                <path d="M145 145h944v654H145z" fill="none" stroke="#b4b400"/>
                <g stroke="#e8e8e8" fill="none"><path d="M16 745v41h40M12 782h8v8h-8zM18 732l4 5 5-5M22 737v5M60 775l10 10M70 775l-10 10"/></g>
            </g>
            <text class="caption" x="850" y="634" text-anchor="middle">INSTALASI SISTIM PENERANGAN LANTAI SATU</text>
        </svg>

        <div class="legend">
            <table>
                <tr><th>TYPE</th><th>QTY</th></tr>
                <tr><td><svg viewBox="-6 -5 12 10"><use href="#lamp"/></svg></td><td>47</td></tr>
                <tr><td><svg viewBox="-6 -5 12 10"><use href="#oval"/></svg></td><td>19</td></tr>
                <tr><td><svg viewBox="-6 -5 12 10"><use href="#diamond"/></svg></td><td>22</td></tr>
                <tr><td><svg viewBox="-6 -5 12 10"><use href="#square"/></svg></td><td>21</td></tr>
                <tr><td><svg viewBox="-6 -5 12 10"><use href="#bar"/></svg></td><td>3</td></tr>
                <tr><td><svg viewBox="-6 -5 12 10"><use href="#tri"/></svg></td><td>3</td></tr>
            </table>
            <table>
                <tr><th>TYPE</th><th>QTY</th></tr>
                <tr><td><svg class="wide" viewBox="-9 -5 18 10"><path d="M-7-2v4M7-2v4M-7 0H7" stroke="#e0e000" stroke-width="1.500"/></svg></td><td>8</td></tr>
                <tr><td><svg viewBox="-6 -5 12 10"><path d="M-4 2h8M-3 2c0-8 6-8 6 0M-1 4h2" fill="none" stroke="#e0e000"/></svg></td><td>19</td></tr>
                <tr><td><svg viewBox="-6 -5 12 10"><path d="M-5-3h9v3h-9z" fill="#d8d880"/><path d="M0 0l4 4V-2z" fill="#eee"/></svg></td><td>20</td></tr>
                <tr><td><svg viewBox="-6 -5 12 10"><path d="M-3-2h2c2 0 2 4 0 4h-2M1 0h3" fill="none" stroke="#e0e000"/></svg></td><td>40</td></tr>
                <tr><td class="ps"><svg viewBox="-6 -5 12 10"><path d="M-2-3h7v6h-7z" fill="#00c21c"/></svg>PS</td><td>2</td></tr>
                <tr><td><svg viewBox="-6 -5 12 10"><path d="M-5-4H5V4H-5z" fill="none" stroke="#ddd"/><circle cx="-1" cy="2" r="2" fill="none" stroke="#e0e000"/><path d="M0 1l3-4" stroke="#00c21c" stroke-width="2"/></svg>6</td><td>1</td></tr>
            </table>
            <table>
                <tr><th>TYPE</th><th>QTY</th></tr>
                <tr><td><svg viewBox="-6 -5 12 10"><circle cx="-1" cy="2" r="2" fill="none" stroke="#e0e000"/><path d="M0 1l2-4h2" stroke="#00c21c" fill="none" stroke-width="1.500"/></svg></td><td>4</td></tr>
                <tr><td><svg viewBox="-6 -5 12 10"><circle cx="-1" cy="2" r="2" fill="none" stroke="#e0e000"/><path d="M0 1l2-4h2M1-1h3" stroke="#00c21c" fill="none" stroke-width="1.500"/></svg></td><td>2</td></tr>
                <tr><td><svg viewBox="-6 -5 12 10"><circle cx="-1" cy="2" r="2" fill="none" stroke="#e0e000"/><path d="M0 1l3-4" stroke="#00c21c" stroke-width="2"/></svg></td><td>19</td></tr>
                <tr><td><svg class="slim" viewBox="-5 -5 10 10"><path d="M-5-2H5v5H-5z" fill="#d8d820"/><path d="M-4 2l8-4" stroke="#555"/></svg>LDP</td><td>1</td></tr>
                <tr><td></td><td></td></tr>
                <tr><td></td><td></td></tr>
            </table>
        </div>

        <div class="view-label">[&minus;][Top][2D Wireframe]</div>
        <div class="view-controls">
            <button aria-label="Minimize view"><svg viewBox="0 0 10 10"><path d="M1 7h8" stroke="#eee" stroke-width="2"/></svg></button>
            <button aria-label="Restore view"><svg viewBox="0 0 10 10"><path d="M1 3h6v6H1zM3 3V1h6v6H7" fill="none" stroke="#eee" stroke-width="1.500"/></svg></button>
            <button aria-label="Close view"><svg viewBox="0 0 10 10"><path d="M2 2l6 6M8 2L2 8" stroke="#eee" stroke-width="2"/></svg></button>
        </div>
        <svg class="cube" viewBox="0 0 112 112">
            <circle cx="56" cy="56" r="43" fill="none" stroke="#43484d" stroke-width="10"/>
            <path d="M35 35h42v42H35z" fill="#b2b2b4"/><path d="M43 43h26v26H43z" fill="#a9b0b6"/>
            <text class="face" x="56" y="60">TOP</text>
            <text x="56" y="17">N</text><text x="56" y="107">S</text><text x="11" y="62">W</text><text x="101" y="62">E</text>
        </svg>
        <button class="wcs">WCS <svg class="c"><use href="#caret"/></svg></button>
        <div class="navbar">
            <svg viewBox="0 0 26 170" fill="none" stroke="#3c4147">
                <circle cx="21" cy="4" r="2.500"/><circle cx="21" cy="165" r="2.500"/>
                <path d="M13 16h9v9a9 9 0 1 1-9-9z"/><circle cx="13" cy="25" r="5"/>
                <path d="M11 39h4l-2 2zM11 95h4l-2 2zM11 126h4l-2 2z" fill="#3a3f45"/>
                <path d="M8 66l-4-6c1-2 3 0 4 1l-1-8c2-1 2 1 3 4v-6c2-1 2 1 3 5l1-5c2 0 2 2 2 6l2-4c2 1 1 3 0 6l-1 5-2 3H9z"/>
                <path d="M4 73l13 13M17 73L4 86M4 76v-3h3M14 73h3v3M4 83v3h3"/><circle cx="17" cy="84" r="4"/><path d="M20 87l3 4" stroke-width="2"/>
                <path d="M11 121v-14H9l4-5 3 5h-2v14zM13 109c-12 0-12 8 0 8M13 109c12 0 12 8 0 8M7 114v5h-4"/>
                <path d="M1 45h24M1 132h24" stroke="#666b73"/>
                <path d="M4 136h4v5H4zM11 136h4v5h-4zM18 136h4v5h-4zM4 144h12v9H4z"/><path d="M8 146l5 3-5 3z" fill="#3a3f45"/>
            </svg>
        </div>

        <div class="command">
            <p class="long">Autodesk DWG.&nbsp; This file is a TrustedDWG last saved by an Autodesk application or Autodesk licensed application.</p>
            <p>Command:</p>
            <p>Command:</p>
            <div class="prompt">
                <span class="grip"></span>
                <button aria-label="Close command line"><svg class="x"><use href="#close"/></svg></button>
                <button aria-label="Customize"><svg><use href="#wrench"/></svg></button>
                <label class="entry">
                    <svg viewBox="0 0 14 12"><path d="M1 1h12v10H1z" fill="#a4a8ac" stroke="#787c80"/><path d="M3 3l3 3-3 3M7 9h4" fill="none" stroke="#333"/></svg>
                    <svg class="c"><use href="#caret"/></svg>
                    <input type="text" aria-label="Command" placeholder="Type a command">
                    <svg class="c flip-y"><use href="#caret"/></svg>
                </label>
            </div>
        </div>
    </main>

    <footer class="status">
        <nav class="layouts">
            <a class="on" href="#">Model</a><a href="#">Layout1</a><button aria-label="New layout">+</button>
        </nav>
        <div class="bar">
            <span class="coords">177663.45, 65382.84, 0.00</span>
            <button class="word">MODEL</button>
            <button aria-label="Grid"><svg><use href="#s-grid"/></svg></button>
            <button aria-label="Snap"><svg><use href="#s-dots"/></svg></button>
            <button class="arrow" aria-label="Snap menu"><svg><use href="#caret"/></svg></button>
            <button aria-label="Infer constraints"><svg><use href="#s-infer"/></svg></button>
            <button class="on" aria-label="Dynamic input"><svg><use href="#s-dyn"/></svg></button>
            <button aria-label="Ortho"><svg><use href="#s-ortho"/></svg></button>
            <button aria-label="Polar"><svg><use href="#s-polar"/></svg></button>
            <button class="arrow" aria-label="Polar menu"><svg><use href="#caret"/></svg></button>
            <button aria-label="Isodraft"><svg><use href="#s-iso"/></svg></button>
            <button class="arrow" aria-label="Isodraft menu"><svg><use href="#caret"/></svg></button>
            <button class="on" aria-label="Object snap tracking"><svg><use href="#s-track"/></svg></button>
            <button class="on" aria-label="Object snap"><svg><use href="#s-osnap"/></svg></button>
            <button class="arrow" aria-label="Object snap menu"><svg><use href="#caret"/></svg></button>
            <button aria-label="Lineweight"><svg><use href="#s-lw"/></svg></button>
            <button class="on" aria-label="Transparency"><svg><use href="#s-trans"/></svg></button>
            <button aria-label="Selection cycling"><svg><use href="#s-cycle"/></svg></button>
            <button aria-label="3D object snap"><svg><use href="#s-cube"/></svg></button>
            <button class="arrow" aria-label="3D snap menu"><svg><use href="#caret"/></svg></button>
            <button class="on" aria-label="Dynamic UCS"><svg><use href="#s-ucs"/></svg></button>
            <button aria-label="Selection filter"><svg><use href="#s-filter"/></svg></button>
            <button class="arrow" aria-label="Filter menu"><svg><use href="#caret"/></svg></button>
            <button class="on" aria-label="Gizmo"><svg><use href="#s-gizmo"/></svg></button>
            <button class="arrow" aria-label="Gizmo menu"><svg><use href="#caret"/></svg></button>
            <button class="on" aria-label="Annotation visibility"><svg viewBox="0 0 16 16"><use href="#s-anno"/><circle cx="13" cy="3" r="2" fill="none" stroke="#fff"/></svg></button>
            <button aria-label="Auto scale"><svg viewBox="0 0 16 16"><use href="#s-anno"/><path d="M14 0l-3 4h2l-1 3 4-4h-2z" fill="#ddd"/></svg></button>
            <button aria-label="Annotation scale"><svg><use href="#s-anno"/></svg></button>
            <button class="word">1:1 / 100%</button>
            <button class="arrow" aria-label="Scale menu"><svg><use href="#caret"/></svg></button>
            <button aria-label="Workspace"><svg><use href="#s-gear"/></svg></button>
            <button class="arrow" aria-label="Workspace menu"><svg><use href="#caret"/></svg></button>
            <button aria-label="Annotation monitor"><svg><use href="#s-plus"/></svg></button>
            <button class="word units"><svg><use href="#s-ruler"/></svg>Decimal</button>
            <button class="arrow" aria-label="Units menu"><svg><use href="#caret"/></svg></button>
            <button aria-label="Quick properties"><svg><use href="#s-props"/></svg></button>
            <button aria-label="Lock UI"><svg><use href="#s-uilock"/></svg></button>
            <button class="arrow" aria-label="Lock menu"><svg><use href="#caret"/></svg></button>
            <button aria-label="Isolate objects"><svg><use href="#s-isolate"/></svg></button>
            <button class="on" aria-label="Graphics performance"><svg><use href="#s-perf"/></svg></button>
            <button aria-label="Trusted DWG"><svg><use href="#s-doc"/></svg></button>
            <button aria-label="Clean screen"><svg><use href="#s-full"/></svg></button>
            <button aria-label="Customization"><svg><use href="#s-menu"/></svg></button>
        </div>
    </footer>
    <script src="plan.js"></script>
</body>
</html>
```
FILE: styles.css
```css
* {
    box-sizing: border-box;
}
body {
    margin: 0;
    height: 100vh;
    display: flex;
    flex-direction: column;
    overflow: hidden;
    background: #383838;
    color: #e0e0e0;
    font: 9px/12px "Open Sans", "Noto Sans", sans-serif;
}
button, input, select {
    font: inherit;
    color: inherit;
    border: 0;
    padding: 0;
    margin: 0;
    background: none;
}
a {
    color: inherit;
    text-decoration: none;
}
h1, h2, p {
    margin: 0;
    font: inherit;
}
svg {
    display: block;
    flex: none;
}
.sprite {
    position: absolute;
    width: 0;
    height: 0;
}
.c {
    width: 7px;
    height: 7px;
}

/* title bar */
.titlebar {
    height: 19px;
    display: flex;
    background: #602114;
    flex: none;
}
.app-menu {
    position: absolute;
    z-index: 2;
    left: 0;
    top: 0;
    width: 33px;
    height: 33px;
    border: 1px solid #222;
    background: linear-gradient(#8a8a8a, #a8a8a8 60%, #777);
}
.app-menu svg {
    width: 31px;
    height: 31px;
}
.quick {
    margin-left: 33px;
    width: 248px;
    padding-left: 4px;
    display: flex;
    align-items: center;
    background: #9b9e9c;
    color: #e8e8e8;
}
.quick button {
    width: 19px;
    display: flex;
    justify-content: center;
}
.quick svg, .info svg {
    width: 14px;
    height: 14px;
}
.quick .mini, .info .mini {
    width: 11px;
}
.quick .mini svg, .info .mini svg, .info .c {
    width: 5px;
    height: 5px;
}
.quick .mini:last-child {
    margin-left: 1px;
}
.quick .mini:last-child svg {
    width: 8px;
    height: 8px;
}
.flip {
    transform: scaleX(-1);
}
.flip-y {
    transform: scaleY(-1);
}
.titlebar h1 {
    flex: 1;
    text-align: center;
    line-height: 19px;
    color: #170b08;
}
.titlebar h1 span {
    margin-left: 8px;
}
.info {
    width: 358px;
    display: flex;
    align-items: center;
    background: #9b9e9c;
    color: #f4f4f4;
}
.info button {
    display: flex;
    align-items: center;
    justify-content: center;
    width: 20px;
}
.info input {
    width: 143px;
    height: 17px;
    padding: 0 2px;
    border: 1px solid #4d504e;
    background: #6f7270;
    font-style: italic;
}
.info input::placeholder {
    color: #cfcfcf;
}
.info .sign {
    width: 92px;
    margin-left: 2px;
    gap: 3px;
    justify-content: flex-start;
}
.sign .c {
    margin-left: auto;
}
.info .cart {
    margin-left: 3px;
}
.info .help {
    margin-left: 8px;
}
.window {
    width: 129px;
    padding-left: 19px;
    display: flex;
    color: #e6cdc6;
}
.window button {
    width: 37px;
    display: flex;
    align-items: center;
    justify-content: center;
}
.window svg {
    width: 9px;
    height: 9px;
}

/* ribbon tabs */
.menu {
    height: 17px;
    flex: none;
    padding-left: 36px;
    display: flex;
    background: #505050;
    border-top: 1px solid #404040;
    color: #c4c4c4;
    line-height: 16px;
}
.menu a {
    padding: 0 8px;
}
.menu .on {
    background: #646464;
    color: #fff;
    border: 1px solid #3e3e3e;
    border-bottom: 0;
    line-height: 15px;
}
.menu button {
    margin-left: 16px;
}
.menu button svg {
    width: 20px;
    height: 8px;
}

/* ribbon panels */
.ribbon {
    height: 78px;
    flex: none;
    padding-left: 2px;
    display: grid;
    grid-template-columns: 179px 200px 151px 219px 128px 212px 56px 78px 64px 49px;
    background: linear-gradient(#4b4b4b 24px, #43454a 24px, #43454a 50px, #373737 50px);
    border-top: 1px solid #3c3c3c;
}
.panel {
    display: flex;
    flex-direction: column;
    background: #5a5a5a;
    border-right: 1px solid #444;
}
.tools {
    flex: 1;
    display: flex;
    padding: 2px 2px 0 0;
}
.tools.pad {
    padding-left: 3px;
}
.panel h2 {
    height: 15px;
    display: flex;
    align-items: center;
    justify-content: center;
    gap: 4px;
    background: #484848;
    color: #dcdcdc;
    position: relative;
}
.panel .launch {
    position: absolute;
    right: 3px;
    width: 7px;
    height: 7px;
}
.big {
    display: flex;
    flex-direction: column;
    align-items: center;
    padding-top: 1px;
}
.big svg, .glyph {
    width: 26px;
    height: 26px;
    margin-bottom: 4px;
}
.glyph {
    font-size: 30px;
    line-height: 28px;
    font-weight: 600;
}
.big .c, .tools .c {
    width: 6px;
    height: 6px;
    margin: 0;
}
.w33 { width: 33px; }
.w36 { width: 37px; }
.w42 { width: 42px; }
.w50 { width: 50px; }
.w58 { width: 58px; }
.grow { flex: 1; }
.col button {
    height: 19px;
    display: flex;
    align-items: center;
    gap: 3px;
    padding-left: 3px;
    white-space: nowrap;
}
.col svg {
    width: 14px;
    height: 14px;
}
.tools .col button .c {
    margin-left: 3px;
}
.icons {
    width: 17px;
}
.icons button {
    padding-left: 2px;
}
.icons .on {
    background: #4f80b4;
    padding-right: 2px;
}
.row {
    display: flex;
}
.col .row button {
    padding-left: 2px;
    width: 19px;
}
.col .row button:last-child {
    width: auto;
}
.combo {
    height: 17px;
    margin: 1px 0 2px;
    padding: 0 3px;
    display: flex;
    align-items: center;
    gap: 3px;
    border: 1px solid #353535;
    background: linear-gradient(#5f5f5f, #6c6c6c);
}
.combo svg {
    width: 13px;
    height: 13px;
}
.combo select {
    flex: 1;
    appearance: none;
}
.swatch {
    width: 11px;
    height: 11px;
    border: 1px solid #222;
    background: #fff;
}
.big-swatch {
    width: 14px;
    height: 13px;
    margin: 0 4px 0 5px;
}
.rule {
    width: 50px;
    border-top: 1px solid #d0d0d0;
}

/* file tabs */
.files {
    height: 25px;
    flex: none;
    padding: 4px 0 0 17px;
    display: flex;
    position: relative;
    z-index: 0;
    background: #383838;
    border-bottom: 3px solid #4a4a4a;
    color: #a8a8a8;
}
.files a {
    height: 18px;
    padding: 0 11px 0 9px;
    line-height: 18px;
    display: flex;
    align-items: center;
    position: relative;
    white-space: nowrap;
    background: linear-gradient(#606060, #4e4e4e);
    border-radius: 8px 12px 0 0;
    border-right: 1px solid #2f2f2f;
}
.files a::before {
    content: "";
    position: absolute;
    left: -4px;
    top: 0;
    width: 12px;
    height: 18px;
    background: inherit;
    border-left: 1px solid #333;
    border-radius: 4px 0 0 0;
    transform: skewX(-22deg);
    z-index: -1;
}
.files a svg {
    width: 7px;
    height: 7px;
    margin-left: auto;
    color: #333;
}
.files .t1 { width: 98px; }
.files .t2 { width: 153px; }
.files .t3 { width: 214px; }
.files .on {
    background: linear-gradient(#8a8a8a, #6a6a6a);
    color: #f4f4f4;
}
.add {
    width: 18px;
    margin-left: 4px;
    background: #4e4e4e;
    border-radius: 0 8px 0 8px;
    color: #ddd;
    font-size: 14px;
}
.more {
    margin-left: auto;
    padding-right: 6px;
}
.more svg {
    width: 8px;
    height: 10px;
}

/* model space */
.canvas {
    flex: 1;
    min-height: 0;
    position: relative;
    overflow: hidden;
    background: #212830;
    border-right: 6px solid #d5dfee;
}
.drawing {
    position: absolute;
    left: 0;
    top: 0;
    width: 1100px;
    height: 664px;
}
.drawing text {
    font-family: "Liberation Sans Narrow", "Liberation Sans", sans-serif;
}
.drawing .caption {
    font: 15px "Liberation Sans Narrow", Lato, sans-serif;
    fill: #d8d8d8;
}
.legend {
    position: absolute;
    left: 158px;
    top: 564px;
    display: flex;
    align-items: flex-start;
    gap: 9px;
}
.legend table {
    border-collapse: collapse;
    width: 52px;
    table-layout: fixed;
    font: 7px/9px "Liberation Sans Narrow", "Liberation Sans", sans-serif;
    color: #f0f0f0;
}
.legend th, .legend td {
    width: 50%;
    height: 12px;
    padding: 0;
    border: 1px solid #d8d8d8;
    text-align: center;
    font-weight: normal;
    white-space: nowrap;
}
.legend svg {
    display: inline-block;
    vertical-align: top;
    width: 12px;
    height: 9px;
}
.legend .wide {
    width: 18px;
}
.legend .slim {
    width: 9px;
}
.legend .ps {
    color: #00c21c;
}
.view-label {
    position: absolute;
    left: 2px;
    top: 5px;
}
.view-controls {
    position: absolute;
    right: 7px;
    top: 7px;
    display: flex;
    gap: 6px;
}
.view-controls svg {
    width: 10px;
    height: 10px;
}
.cube {
    position: absolute;
    right: 10px;
    top: 28px;
    width: 112px;
    height: 112px;
}
.cube text {
    font: bold 17px "Liberation Sans", Arial, sans-serif;
    fill: #b4b8bb;
    text-anchor: middle;
}
.cube .face {
    font-size: 10px;
    fill: #4c545c;
}
.wcs {
    position: absolute;
    right: 47px;
    top: 154px;
    width: 39px;
    height: 14px;
    padding: 0 4px;
    display: flex;
    align-items: center;
    justify-content: space-between;
    border-radius: 3px;
    background: #90949c;
    color: #3c4148;
}
.wcs .c {
    color: #b4bac4;
}
.navbar {
    position: absolute;
    right: 3px;
    top: 188px;
    width: 26px;
    border-radius: 3px;
    background: #575b64;
}

/* command line */
.command {
    position: absolute;
    left: 458px;
    right: 451px;
    bottom: 0;
    display: flex;
    flex-direction: column;
    align-items: flex-start;
    font-family: "Liberation Mono", monospace;
}
.command p {
    margin: 0 0 4px 48px;
    padding: 0 1px;
    border-radius: 2px;
    background: #58595b;
    color: #cfcfcf;
}
.command .long {
    width: 558px;
}
.prompt {
    align-self: stretch;
    height: 21px;
    display: flex;
    align-items: center;
    background: #4b4e51;
}
.grip {
    width: 4px;
    height: 15px;
    margin: 0 5px 0 3px;
    background: repeating-linear-gradient(#999 0 1px, transparent 1px 2px);
}
.prompt button {
    width: 18px;
    color: #ccc;
}
.prompt button svg {
    width: 12px;
    height: 12px;
}
.prompt button .x {
    width: 8px;
    height: 8px;
    margin-left: 1px;
}
.entry {
    flex: 1;
    height: 19px;
    padding: 0 3px;
    margin-left: -2px;
    display: flex;
    align-items: center;
    gap: 2px;
    background: #b9babc;
    color: #333;
}
.entry svg:first-child {
    width: 14px;
    height: 12px;
}
.entry .c {
    color: #444;
}
.entry input {
    flex: 1;
    font-size: 9px;
    font-style: italic;
}
.entry input::placeholder {
    color: #6b6d6f;
}

/* status bar */
.status {
    height: 20px;
    flex: none;
    display: flex;
    justify-content: space-between;
    background: #383838;
}
.layouts {
    height: 15px;
    padding-left: 9px;
    display: flex;
    gap: 2px;
    line-height: 14px;
    color: #a8a8a8;
}
.layouts a, .layouts button {
    padding: 0 9px;
    background: #4e4e4e;
    border-radius: 0 0 8px 8px;
}
.layouts .on {
    background: #757575;
    color: #fff;
    font-weight: 700;
}
.layouts button {
    width: 17px;
    padding: 0;
    font-size: 13px;
}
.bar {
    display: flex;
    align-items: center;
    background: #4c4c4c;
    border-left: 1px solid #666;
    padding-right: 1px;
}
.coords {
    padding: 0 8px 0 26px;
}
.bar button {
    width: 20px;
    height: 20px;
    display: flex;
    align-items: center;
    justify-content: center;
    border-left: 1px solid #434343;
}
.bar svg {
    width: 15px;
    height: 15px;
}
.bar .on {
    background: #5c92c8;
    color: #fff;
}
.bar .arrow {
    width: 12px;
    border: 0;
}
.bar .arrow svg {
    width: 6px;
    height: 6px;
}
.bar .word {
    width: auto;
    padding: 0 5px;
    gap: 6px;
}
```
FILE: plan.js
```js
const NS = "http://www.w3.org/2000/svg";
const plan = document.getElementById("plan");

function add(tag, attrs, text) {
    const el = document.createElementNS(NS, tag);
    for (const key in attrs) el.setAttribute(key, attrs[key]);
    if (text) el.textContent = text;
    plan.appendChild(el);
    return el;
}
function path(d, stroke, width, extra) {
    add("path", Object.assign({ d: d, stroke: stroke, "stroke-width": width || 1, fill: "none" }, extra));
}
function wall(d) {
    path(d, "#b5686c", 3);
    path(d, "#8a4c52", 1);
}
function label(x, y, text, fill, size, turn) {
    const attrs = { x: x, y: y, fill: fill, "font-size": size, "text-anchor": "middle", "dominant-baseline": "central" };
    if (turn) attrs.transform = `rotate(-90 ${x} ${y})`;
    if (size < 9) attrs["font-weight"] = "bold";
    add("text", attrs, text);
}
function put(id, points) {
    points.forEach(([x, y]) => add("use", { href: "#" + id, x: x, y: y }));
}

const RED = "#c4101a", GREEN = "#00c21c", CYAN = "#00c4cc", YELLOW = "#e0e000";

// Grid lines and bubbles
const cols = [["A1", 279], ["A", 397], ["B", 409], ["C", 503], ["D", 597], ["E", 692], ["F", 786], ["G", 834], ["H", 857]];
const rows = [["A1", 260], ["6", 284], ["5", 373], ["4", 397], ["3", 468], ["2", 492], ["1", 581], ["OA", 605]];
const dash = { "stroke-dasharray": "17 4 3 4" };
cols.forEach(([name, x]) => {
    path(`M${x} 253V651`, "#c400c4", 1, dash);
    path(`M${x} 614V643`, RED);
    const cx = name === "B" ? 429 : x, cy = name === "B" ? 676 : 663;
    add("circle", { cx: cx, cy: cy, r: 12, fill: "none", stroke: RED });
    label(cx, cy, name, "#1cd0d0", 13);
});
path("M409 651H429V664", RED);
rows.forEach(([name, y]) => {
    path(`M220 ${y}H874`, "#c400c4", 1, dash);
    path(`M250 ${y}H264`, RED, 1);
    add("circle", { cx: 208, cy: y, r: 12, fill: "none", stroke: RED });
    label(208, y, name, "#1cd0d0", 13);
});

// Dimensions
path("M251 260V605M279 629H857M279 642H857", RED, 1);
cols.forEach(([, x]) => path(`M${x - 4} 629h8`, RED, 2));
rows.forEach(([, y]) => path(`M251 ${y - 3}v6`, RED, 2));
[["2035", 271], ["7600", 328], ["2000", 385], ["6000", 432], ["2000", 480], ["7600", 536], ["2035", 593]]
    .forEach(([t, y]) => label(247, y, t, "#f0f0f0", 6, true));
[["10000", 338], ["1000", 402], ["8000", 456], ["8000", 550], ["8000", 645], ["8000", 739], ["4000", 810], ["2000", 846]]
    .forEach(([t, x]) => label(x, 625, t, "#f0f0f0", 6));
label(568, 637, "49000", "#f0f0f0", 6);

// Site boundary
wall("M279 261H857V604H279");

// Entrance canopy with stippled paving
let seed = 7;
function rand() {
    seed = (seed * 16807) % 2147483647;
    return seed / 2147483647;
}
for (let i = 0; i < 480; i++) {
    const x = 325 + rand() * 94, y = 367 + rand() * 130, s = rand() > 0.85 ? 2 : 1;
    add("rect", { x: Math.round(x), y: Math.round(y), width: s, height: s, fill: RED });
}
add("rect", { x: 337, y: 408, width: 48, height: 48, fill: "url(#brick)", stroke: "#70808a" });
path("M338 409L385 456M385 409L338 456", "#7a1a20", 1);
path("M421 365H327L321 432L327 499H409", "#c8686c", 2);
wall("M409 284H403V333H409V364H421V501H409V531H403V581H409");
path("M421 379v11M421 405v30M421 440v16M421 475v9", CYAN, 2);
[373, 397, 468, 491].forEach(y => add("circle", { cx: 397, cy: y, r: 4, fill: "#6c6c6e" }));

// Rooms: [shared wall, left half, right half]
function rooms(list, flip) {
    list.forEach(([x, left, right]) => {
        const at = flip ? `translate(${x} 864) scale(1 -1)` : `translate(${x} 0)`;
        if (left) add("use", { href: "#unit", transform: at + " scale(-1 1)" });
        if (right) add("use", { href: "#unit", transform: at });
    });
}
rooms([[456, 1, 1], [550, 1, 1], [645, 1, 1], [739, 1, 1], [786, 0, 1]], false);
rooms([[456, 1, 1], [550, 1, 1], [645, 1, 1], [739, 0, 1], [786, 0, 1]], true);
[409, 456, 503, 550, 598, 645, 692, 739, 786].forEach((x, i) => {
    add("use", { href: "#bay", transform: `translate(${x} 0)` });
    if (i !== 6) add("use", { href: "#bay", transform: `translate(${x} 864) scale(1 -1)` });
    label(x + 22, 297, "I. " + (i + 1), YELLOW, 7);
});
[[432, 19], [480, 18], [527, 17], [574, 16], [621, 15], [668, 14], [763, 13], [810, 12]]
    .forEach(([x, n]) => label(x, 566, "I. " + n, YELLOW, 7));
[503, 597, 692, 786].forEach(x => path(`M${x} 284V363M${x} 501V581`, "#c4488c", 1));

// Stair core by grid C
wall("M505 397H569V468H505");
for (let x = 506; x < 547; x += 4) path(`M${x} 397V467`, "#c4101a");
path("M505 415H546M505 450H546", GREEN, 3, { "stroke-dasharray": "3 1" });
path("M521 398L530 414M521 467L530 451", CYAN);

// Service rooms and lift shaft
wall("M627 397H662V468H627ZM627 453H662M673 397H716V468H674V474H692V444H673V468M692 397V444");
path("M640 397H650M636 453H645M636 468H645", RED, 1);
path("M693 401H716M693 464H716", "#b5686c", 5, { "stroke-dasharray": "2 1" });
path("M694 404H715V461H694ZL715 461M715 404L694 461", RED);
path("M671 398V443M684 398V443M672 409C678 409 683 405 683 398M663 427h6v12h-6zM663 433h6M676 450h8v10h-8z", CYAN);
path("M685 430h6v10h-6zM685 435h6M688 430v10", CYAN);
path("M692 405V440", CYAN, 2, { "stroke-dasharray": "6 2" });
label(704, 433, "VOID", RED, 7);

// Rooms 10 and 11
wall("M756 385H834M756 432H834M756 480H834M834 284V581M757 385V409H777M757 421V443M757 480V456H777M786 385V409M786 456V480M810 365V385");
path("M834 432V468", CYAN, 2);
path("M758 387h10v10h-10zM758 469h10v10h-10z", CYAN, 2);
path("M757 410H769C769 416 764 421 757 421M757 455H769C769 449 764 443 757 443M786 400C780 400 777 404 777 409M786 465C780 465 777 461 777 456M810 374C804 374 801 378 801 383H810M822 482C816 482 814 486 814 489H822M822 493C817 493 815 496 814 500", CYAN);
path("M822 480h12v21h-12zM822 491h12M822 480l12 11M834 480l-12 11M822 491l12 10M834 491l-12 10", RED);
path("M779 423V408H811M779 442V456H811M752 464V420H805V445H752M774 388H791V476H774M773 400H779V423M773 464H779V442", GREEN);
put("oval", [[812, 408], [812, 456]]);
put("sock", [[795, 429], [810, 429], [795, 436], [810, 436]]);
label(823, 416, "I. 10", YELLOW, 7);
label(823, 456, "I. 11", YELLOW, 7);
label(804, 485, "LDP-3", YELLOW, 7);
label(813, 498, "6W", YELLOW, 6);

// Wiring
path("M446 380H664M446 485H664M494 478H736M786 374H736V491H792M488 380V490", GREEN);
path("M432 406H482V459H432ZM446 421H467V443H446M467 443V453H484V490H460V494H448V485H438", GREEN);
path("M491 432V492H476M494 478V496H476M488 488H476M498 415V450M498 432H490M454 488H448V482H436M464 492H446V488H434M464 496H442V494H434", GREEN);
path("M577 415V450H611V415M594 432V460H627M644 409V440M644 440V449H640V470M640 465H673M677 420V432M677 425H687", GREEN);
path("M553 402V418H564V445M823 374V366H805V373M425 380V389H432", GREEN);
path("M696 509V590M702 521H736V509M726 521V561M736 521V534M702 575H696", GREEN);
path("M440 405h14M459 405h14M440 459h14M459 459h14M431 415v14M431 435v14M482 415v14M482 435v14", YELLOW, 2);

// Secondary stair
wall("M716 533V581M692 581H739");
for (let y = 536; y < 570; y += 4) path(`M704 ${y}H714`, RED);
path("M709 532V572H698", RED);
path("M693 535H703V568", YELLOW, 2);
path("M700 581h9M723 581h8", CYAN, 2);
path("M693 550l7 7", CYAN);
label(715, 599, "DARI LT. DASAR", "#e01018", 6);

// Fixtures
put("lamp", [[446, 380], [505, 380], [584, 380], [664, 380], [736, 380], [786, 374], [446, 485], [505, 485], [584, 485], [664, 485],
    [736, 432], [736, 485], [792, 491], [446, 421], [467, 421], [446, 443], [467, 443], [498, 415], [498, 450], [577, 415], [611, 415],
    [594, 432], [577, 450], [611, 450], [644, 460], [677, 432], [702, 521], [726, 521], [726, 561], [779, 423], [779, 442]]);
put("bar", [[645, 410], [645, 440], [677, 421]]);
put("diamond", [[773, 400], [773, 464], [823, 374], [682, 465]]);
put("square", [[774, 390], [774, 474], [688, 451]]);
put("tri", [[564, 418], [564, 445], [703, 576]]);
[[624, 460], [630, 460], [671, 461], [736, 535], [813, 370], [688, 405]].forEach(([x, y]) =>
    add("circle", { cx: x, cy: y, r: 2, fill: "none", stroke: YELLOW }));
add("rect", { x: 464, y: 489, width: 11, height: 11, fill: "#212830", stroke: YELLOW });
path("M468 497l4-6", YELLOW, 2);
add("rect", { x: 550, y: 399, width: 5, height: 5, fill: GREEN });
add("rect", { x: 693, y: 506, width: 5, height: 5, fill: GREEN });
label(560, 402, "PS", GREEN, 7);
label(704, 508, "PS", GREEN, 7);
label(463, 474, "GS", YELLOW, 6);
label(469, 480, "6 GANG", YELLOW, 6);
cols.slice(3, 8).forEach(([, x]) => [284, 397, 468, 581].forEach(y =>
    add("circle", { cx: x, cy: y, r: 2, fill: "none", stroke: RED })));

// Circuit tags
[[491, 369, "3-G04"], [439, 389, "3-G03"], [456, 432, "3-G02"], [544, 387, "3-G02"], [423, 485, "3-G07"], [423, 494, "3-G03"],
    [579, 369, "3-G05"], [673, 369, "3-G06"], [712, 369, "3-G07"], [678, 485, "3-G03"], [577, 497, "3-G11"], [672, 497, "3-G10"],
    [774, 497, "3-G09"], [727, 509, "3-G08"], [706, 590, "1-G07"], [456, 512, "3-G12"],
    [426, 426, "3-G03", 1], [792, 358, "3-G01", 1], [730, 416, "3-G08", 1], [553, 435, "3-G04", 1], [619, 439, "3-G01", 1],
    [654, 438, "3-G02", 1], [752, 464, "3-G08", 1]].forEach(([x, y, text, turn]) => {
    const w = turn ? 7 : 19, h = turn ? 19 : 7;
    add("rect", { x: x - w / 2, y: y - h / 2, width: w, height: h, fill: "#212830", stroke: "#b4b4b4" });
    label(x, y, text, "#00dc20", 6, turn);
});
```
